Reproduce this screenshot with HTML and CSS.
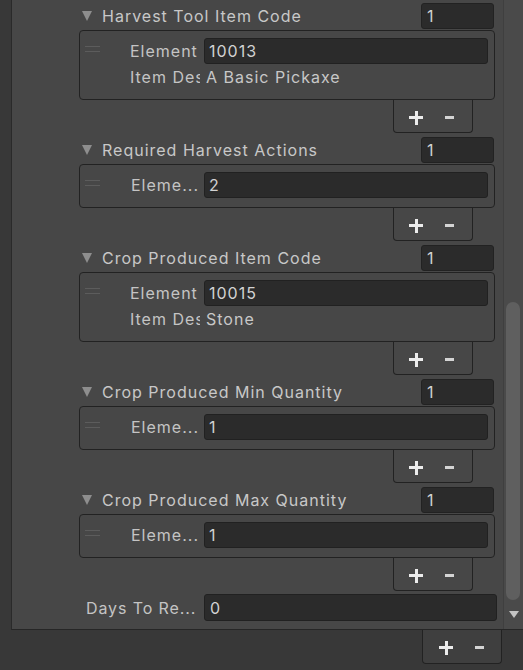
FILE: index.html
```html
<!DOCTYPE html>
<html>
<head>
<meta charset="utf-8">
<link rel="stylesheet" href="styles.css">
</head>
<body>
<div class="panel">
  <div class="content">
    <div class="list">
      <div class="head"><span class="tri"></span><span class="title">Harvest Tool Item Code</span><span class="size">1</span></div>
      <div class="box">
        <div class="row"><span class="handle"></span><span class="label">Element</span><span class="field">10013</span></div>
        <div class="row"><span class="handle blank"></span><span class="label clip">Item Des</span><span class="value">A Basic Pickaxe</span></div>
      </div>
      <div class="foot"><span class="plus"></span><span class="minus"></span></div>
    </div>
    <div class="list">
      <div class="head"><span class="tri"></span><span class="title">Required Harvest Actions</span><span class="size">1</span></div>
      <div class="box">
        <div class="row"><span class="handle"></span><span class="label short">Eleme...</span><span class="field">2</span></div>
      </div>
      <div class="foot"><span class="plus"></span><span class="minus"></span></div>
    </div>
    <div class="list">
      <div class="head"><span class="tri"></span><span class="title">Crop Produced Item Code</span><span class="size">1</span></div>
      <div class="box">
        <div class="row"><span class="handle"></span><span class="label">Element</span><span class="field">10015</span></div>
        <div class="row"><span class="handle blank"></span><span class="label clip">Item Des</span><span class="value">Stone</span></div>
      </div>
      <div class="foot"><span class="plus"></span><span class="minus"></span></div>
    </div>
    <div class="list">
      <div class="head"><span class="tri"></span><span class="title">Crop Produced Min Quantity</span><span class="size">1</span></div>
      <div class="box">
        <div class="row"><span class="handle"></span><span class="label short">Eleme...</span><span class="field">1</span></div>
      </div>
      <div class="foot"><span class="plus"></span><span class="minus"></span></div>
    </div>
    <div class="list">
      <div class="head"><span class="tri"></span><span class="title">Crop Produced Max Quantity</span><span class="size">1</span></div>
      <div class="box">
        <div class="row"><span class="handle"></span><span class="label short">Eleme...</span><span class="field">1</span></div>
      </div>
      <div class="foot"><span class="plus"></span><span class="minus"></span></div>
    </div>
    <div class="prop"><span class="plabel">Days To Re...</span><span class="pfield">0</span></div>
  </div>
  <div class="scrollbar">
    <div class="track-top"></div>
    <div class="thumb"></div>
    <div class="arrow"></div>
  </div>
</div>
<div class="outer-foot"><span class="plus"></span><span class="minus"></span></div>
</body>
</html>
```
FILE: styles.css
```css
html, body {
  margin: 0;
  padding: 0;
}
body {
  width: 523px;
  height: 670px;
  overflow: hidden;
  background: #383838;
  font-family: Inter, "Noto Sans", sans-serif;
  font-size: 16px;
  letter-spacing: 1px;
  color: #c8c8c8;
}
.panel {
  margin-left: 11px;
  width: 512px;
  height: 630px;
  box-sizing: border-box;
  display: flex;
  background: #474747;
  border-left: 1px solid #2a2a2a;
  border-bottom: 1px solid #262626;
}
.content {
  flex: 1;
  padding-top: 3px;
  overflow: hidden;
}
.list {
  margin: 0 8px 4px 67px;
}
.head {
  display: flex;
  align-items: center;
  height: 26px;
  margin-bottom: 1px;
}
.tri {
  width: 0;
  height: 0;
  margin-left: 3px;
  border-left: 5.5px solid transparent;
  border-right: 5.5px solid transparent;
  border-top: 10px solid #8e8e8e;
}
.title {
  margin-left: 10px;
  white-space: nowrap;
}
.size {
  margin-left: auto;
  margin-right: 1px;
  width: 73px;
  height: 26px;
  box-sizing: border-box;
  padding-left: 5px;
  line-height: 25px;
  background: #2b2b2b;
  border: 1px solid #222222;
  border-radius: 3px;
  color: #d2d2d2;
}
.box {
  border: 1px solid #222222;
  border-radius: 4px;
  padding: 7px 6px 9px 5px;
}
.row {
  display: flex;
  align-items: center;
  height: 26px;
}
.handle {
  width: 15px;
  height: 6px;
  box-sizing: border-box;
  border-top: 1px solid #5c5c5c;
  border-bottom: 1px solid #5c5c5c;
  margin-right: 30px;
  margin-top: -4px;
}
.handle.blank {
  border: none;
}
.label {
  width: 74px;
  flex: none;
  overflow: hidden;
  white-space: nowrap;
  color: #c4c4c4;
}
.label.clip {
  width: 70px;
  margin-right: 4px;
}
.label.short {
  padding-left: 1px;
  width: 73px;
}
.field {
  flex: 1;
  height: 26px;
  box-sizing: border-box;
  padding-left: 4px;
  line-height: 25px;
  background: #2b2b2b;
  border: 1px solid #212121;
  border-radius: 3px;
  color: #d2d2d2;
}
.value {
  padding-left: 2px;
  color: #c8c8c8;
}
.foot {
  width: 80px;
  height: 33px;
  box-sizing: border-box;
  margin-left: auto;
  margin-right: 22px;
  border: 1px solid #222222;
  border-top: none;
  border-radius: 0 0 4px 4px;
  display: flex;
  align-items: center;
  padding-left: 15px;
  padding-top: 3px;
}
.plus {
  position: relative;
  width: 14px;
  height: 14px;
  flex: none;
}
.plus::before, .plus::after {
  content: "";
  position: absolute;
  background: #ececec;
}
.plus::before {
  left: 0;
  top: 5.5px;
  width: 14px;
  height: 3px;
}
.plus::after {
  left: 5.5px;
  top: 0;
  width: 3px;
  height: 14px;
}
.minus {
  margin-left: 22px;
  width: 9px;
  height: 3px;
  background: #d4d4d4;
  flex: none;
}
.prop {
  display: flex;
  align-items: center;
  height: 27px;
  margin: -1px 6px 0 74px;
}
.plabel {
  width: 118px;
  flex: none;
  white-space: nowrap;
  letter-spacing: 0.9px;
  color: #c4c4c4;
}
.pfield {
  flex: 1;
  height: 27px;
  box-sizing: border-box;
  padding-left: 5px;
  line-height: 26px;
  background: #2b2b2b;
  border: 1px solid #212121;
  border-radius: 3px;
  color: #d2d2d2;
}
.scrollbar {
  width: 20px;
  flex: none;
  display: flex;
  flex-direction: column;
  background: #4a4a4a;
  border-left: 1px solid #3f3f3f;
  box-sizing: border-box;
}
.track-top {
  height: 302px;
}
.thumb {
  margin-left: 2px;
  width: 14px;
  height: 298px;
  border-radius: 7px;
  background: #5f5f5f;
}
.arrow {
  width: 0;
  height: 0;
  margin: 11px 0 0 5px;
  border-left: 5px solid transparent;
  border-right: 5px solid transparent;
  border-top: 7px solid #c4c4c4;
}
.outer-foot {
  margin-left: 422px;
  width: 80px;
  height: 34px;
  box-sizing: border-box;
  background: #3f3f3f;
  border: 1px solid #222222;
  border-top: none;
  border-radius: 0 0 4px 4px;
  display: flex;
  align-items: center;
  padding-left: 16px;
  padding-top: 2px;
}
```
